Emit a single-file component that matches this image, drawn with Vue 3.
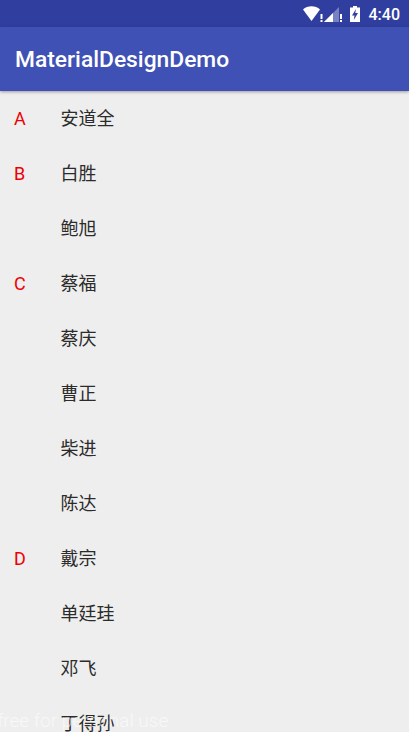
<script setup>
const rows = [
  { letter: 'A', name: '安道全' },
  { letter: 'B', name: '白胜' },
  { letter: '', name: '鲍旭' },
  { letter: 'C', name: '蔡福' },
  { letter: '', name: '蔡庆' },
  { letter: '', name: '曹正' },
  { letter: '', name: '柴进' },
  { letter: '', name: '陈达' },
  { letter: 'D', name: '戴宗' },
  { letter: '', name: '单廷珪' },
  { letter: '', name: '邓飞' },
  { letter: '', name: '丁得孙' },
]
</script>

<template>
  <div class="screen">
    <div class="status">
      <svg class="ic-wifi" width="20" height="16" viewBox="0 0 20 16">
        <path d="M0 3.5 C4.5 -0.8 12.5 -0.8 17 3.5 L8.5 15 Z" fill="#fff" />
        <rect x="17.5" y="8" width="2" height="5" fill="#fff" />
        <rect x="17.5" y="14" width="2" height="2" fill="#fff" />
      </svg>
      <svg class="ic-signal" width="18" height="16" viewBox="0 0 18 16">
        <path d="M0 16 L15 1 V16 Z" fill="#fff" fill-opacity="0.35" />
        <path d="M0 16 L9 7 V16 Z" fill="#fff" />
        <rect x="16" y="8" width="2" height="5" fill="#fff" />
        <rect x="16" y="14" width="2" height="2" fill="#fff" />
      </svg>
      <svg class="ic-batt" width="10" height="16" viewBox="0 0 10 16">
        <path d="M3 0 H7 V1.5 H10 V16 H0 V1.5 H3 Z" fill="#fff" />
        <path d="M6 3 L2 9.5 H4.5 L3.8 14 L8 7 H5.3 Z" fill="#303f9f" />
      </svg>
      <span class="time">4:40</span>
    </div>
    <header class="bar">MaterialDesignDemo</header>
    <ul class="list">
      <li v-for="row in rows" :key="row.name" class="row">
        <span class="letter">{{ row.letter }}</span>
        <span class="name">{{ row.name }}</span>
      </li>
    </ul>
    <div class="mark">free for personal use</div>
  </div>
</template>

<style scoped>
.screen {
  position: relative;
  width: 409px;
  height: 732px;
  overflow: hidden;
  background: #eeeeee;
  font-family: Roboto, "Noto Sans CJK SC", sans-serif;
}
.status {
  height: 27px;
  background: #303f9f;
  display: flex;
  align-items: center;
  justify-content: flex-end;
  padding-right: 9px;
  box-sizing: border-box;
  color: #fff;
}
.ic-wifi { margin-right: 1px; }
.ic-signal { margin-right: 8px; }
.ic-batt { margin-right: 9px; }
.time {
  font-size: 16px;
  font-weight: 500;
  padding-top: 1px;
}
.bar {
  height: 64px;
  background: #3f51b5;
  color: #fff;
  font-size: 22.8px;
  font-weight: 500;
  display: flex;
  align-items: center;
  padding-left: 15px;
  padding-top: 1px;
  box-sizing: border-box;
  box-shadow: 0 1px 3px rgba(0, 0, 0, 0.35);
  position: relative;
}
.list {
  list-style: none;
  margin: 0;
  padding: 0;
}
.row {
  height: 55px;
  display: flex;
  align-items: center;
  font-size: 18px;
}
.letter {
  width: 60.5px;
  padding-left: 14px;
  box-sizing: border-box;
  color: #ee0000;
  font-size: 18px;
}
.name {
  color: #2b2b2b;
  font-family: "Noto Sans CJK SC", sans-serif;
  margin-bottom: 3px;
}
.mark {
  position: absolute;
  left: -3px;
  top: 709px;
  font-size: 19px;
  font-weight: 300;
  color: rgba(255, 255, 255, 0.6);
  white-space: nowrap;
}
</style>
